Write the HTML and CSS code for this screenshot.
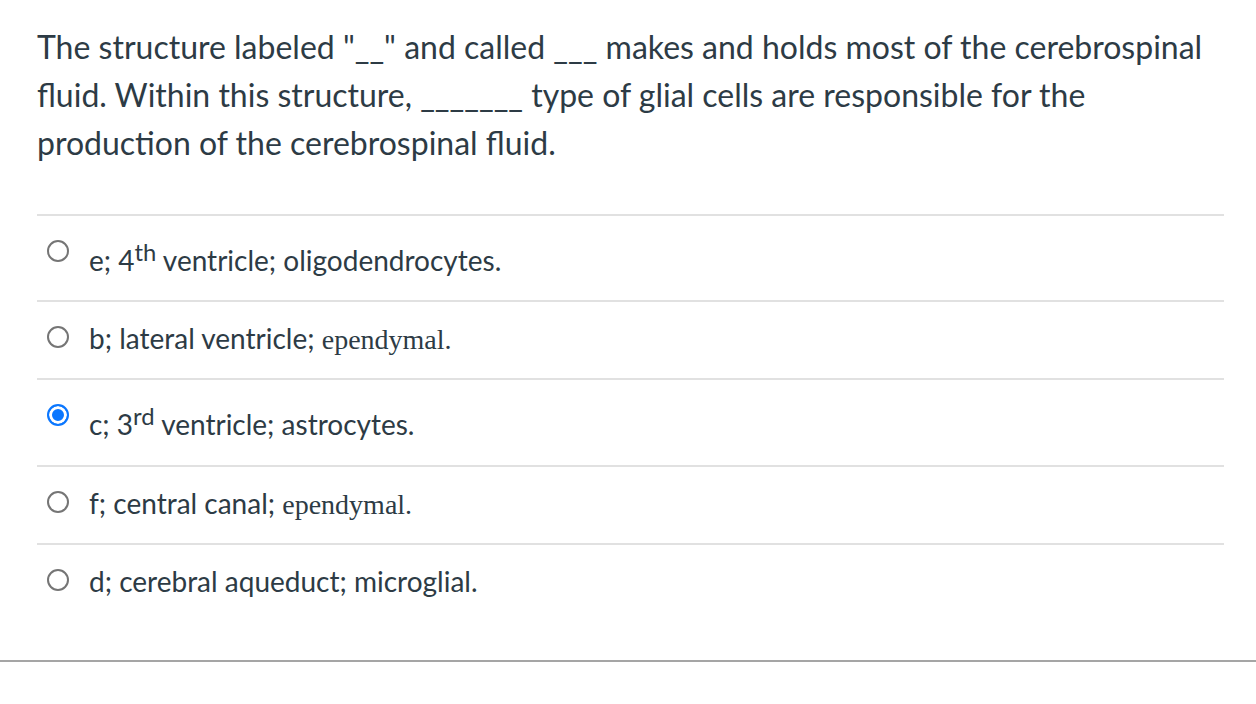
FILE: index.html
```html
<!DOCTYPE html>
<html>
<head>
<meta charset="utf-8">
<link rel="stylesheet" href="styles.css">
</head>
<body>
<div class="quiz">
  <div class="question">The structure labeled "__" and called ___ makes and holds most of the cerebrospinal fluid. Within this structure, _______ type of glial cells are responsible for the production of the cerebrospinal fluid.</div>
  <div class="answers">
    <div class="option"><span class="radio"></span><span class="label">e; 4<sup>th</sup> ventricle; oligodendrocytes.</span></div>
    <div class="option"><span class="radio"></span><span class="label">b; lateral ventricle; <span class="serif">ependymal.</span></span></div>
    <div class="option"><span class="radio checked"></span><span class="label">c; 3<sup>rd</sup> ventricle; astrocytes.</span></div>
    <div class="option"><span class="radio"></span><span class="label">f; central canal; <span class="serif">ependymal.</span></span></div>
    <div class="option"><span class="radio"></span><span class="label">d; cerebral aqueduct; microglial.</span></div>
  </div>
</div>
<div class="rule"></div>
</body>
</html>
```

FILE: styles.css
```css
html, body {
  margin: 0;
  padding: 0;
  background: #ffffff;
}
body {
  font-family: Lato, "Liberation Sans", sans-serif;
  color: #2d3b45;
}
.quiz {
  padding: 23px 32px 0 37px;
}
.question {
  font-size: 32px;
  line-height: 48px;
}
.answers {
  margin-top: 47px;
}
.option {
  display: flex;
  align-items: flex-start;
  border-top: 2px solid #e1e1e1;
  padding: 20px 0 24px 10px;
  font-size: 28px;
  line-height: 32px;
}
.radio {
  flex: none;
  width: 18px;
  height: 18px;
  border: 2px solid #757575;
  border-radius: 50%;
  margin-top: 4px;
  margin-right: 20px;
  box-sizing: content-box;
  background: #fff;
}
.radio.checked {
  border-color: #0b77ff;
  background: #0b77ff;
  box-shadow: inset 0 0 0 3px #ffffff;
}
.label sup {
  font-size: 0.85em;
}
.serif {
  font-family: "Liberation Serif", serif;
  line-height: 1;
}
.rule {
  margin-top: 39px;
  height: 2px;
  background: #a5a5a5;
}
```
